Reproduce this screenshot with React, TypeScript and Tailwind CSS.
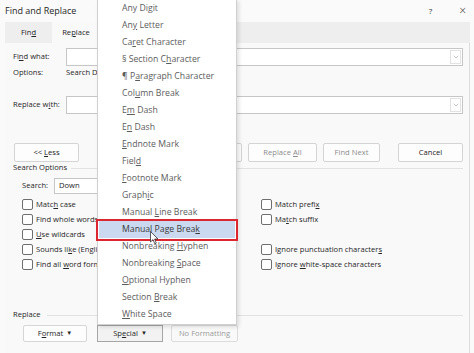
import { ChevronDown } from 'lucide-react'

function Mn({ t, k }: { t: string; k: number }) {
  if (k < 0) return <span>{t}</span>
  return (
    <span className="whitespace-pre">
      {t.slice(0, k)}
      <span className="underline underline-offset-[1px] decoration-[0.5px]">{t[k]}</span>
      {t.slice(k + 1)}
    </span>
  )
}

const menu: [string, number][] = [
  ['Any Digit', 6],
  ['Any Letter', 2],
  ['Caret Character', 2],
  ['§ Section Character', 11],
  ['¶ Paragraph Character', 3],
  ['Column Break', 3],
  ['Em Dash', 1],
  ['En Dash', 1],
  ['Endnote Mark', 0],
  ['Field', 4],
  ['Footnote Mark', 0],
  ['Graphic', 5],
  ['Manual Line Break', 7],
  ['Manual Page Break', 16],
  ['Nonbreaking Hyphen', 12],
  ['Nonbreaking Space', 12],
  ['Optional Hyphen', 0],
  ['Section Break', 8],
  ['White Space', 0],
]

function Combo() {
  return (
    <div className="flex-1 h-[18px] bg-white border border-[#c6c6c6] flex justify-end items-center pr-[1px]">
      <div className="w-[11px] h-[14px] border border-[#e2e2e2] flex items-center justify-center">
        <ChevronDown size={8} strokeWidth={1.5} className="text-[#8a8a8a]" />
      </div>
    </div>
  )
}

function Check({ t, k }: { t: string; k: number }) {
  return (
    <div className="h-[15px] flex items-center gap-[3px] whitespace-nowrap">
      <span className="w-[11px] h-[11px] bg-white border border-[#6e6e6e] rounded-[2px] shrink-0" />
      <Mn t={t} k={k} />
    </div>
  )
}

function Btn({ w, dim, children }: { w: string; dim?: boolean; children: React.ReactNode }) {
  return (
    <div
      className={`${w} h-[19px] shrink-0 bg-[#fdfdfd] border border-[#d4d4d4] rounded-[2px] flex items-center justify-center ${dim ? 'text-[#8c8c8c]' : 'text-[#222]'}`}
    >
      {children}
    </div>
  )
}

export default function App() {
  return (
    <div className="relative w-[474px] h-[353px] overflow-hidden bg-[#fafafa] flex flex-col font-['Open_Sans',sans-serif] text-[7.6px] text-[#262626]">
      {/* title */}
      <div className="h-[22px] shrink-0 flex items-center pl-[5px] pr-[8px]">
        <span className="text-[9px]">Find and Replace</span>
        <div className="ml-auto flex items-center gap-[27px] text-[#333]">
          <span className="text-[8px]">?</span>
          <span className="text-[12px] font-light leading-none">×</span>
        </div>
      </div>

      {/* tabs */}
      <div className="h-[21px] shrink-0 ml-[5px] mr-[4px] bg-[#eeeeef] flex">
        <div className="w-[47px] flex items-center justify-center">
          <Mn t="Find" k={3} />
        </div>
        <div className="w-[48px] bg-[#f9f9f9] flex items-center justify-center">
          <Mn t="Replace" k={2} />
        </div>
      </div>

      {/* panel */}
      <div className="flex-1 ml-[5px] mr-[4px] bg-[#f9f9f9] border-r border-[#dcdcdc] pl-[8px] pr-[6px] flex flex-col">
        <div className="mt-[5px] h-[18px] flex items-center">
          <span className="w-[53px] shrink-0">
            <Mn t="Find what:" k={2} />
          </span>
          <Combo />
        </div>
        <div className="h-[14px] flex items-center">
          <span className="w-[53px] shrink-0">Options:</span>
          <span>Search Down</span>
        </div>
        <div className="mt-[16px] h-[18px] flex items-center">
          <span className="w-[53px] shrink-0">
            <Mn t="Replace with:" k={9} />
          </span>
          <Combo />
        </div>

        <div className="mt-[29px] h-[19px] flex items-center">
          <div className="ml-[1px]">
            <Btn w="w-[65px]">
              <span className="whitespace-pre">
                {'<< '}
                <span className="underline underline-offset-[1px] decoration-[0.5px]">L</span>
                ess
              </span>
            </Btn>
          </div>
          <div className="ml-[94px]">
            <Btn w="w-[69px]" dim>
              <Mn t="Replace" k={0} />
            </Btn>
          </div>
          <div className="ml-[6px]">
            <Btn w="w-[69px]" dim>
              <Mn t="Replace All" k={8} />
            </Btn>
          </div>
          <div className="ml-[6px]">
            <Btn w="w-[57px]" dim>
              <Mn t="Find Next" k={-1} />
            </Btn>
          </div>
          <div className="ml-[18px]">
            <Btn w="w-[65px]">Cancel</Btn>
          </div>
        </div>

        <div className="h-[12px] flex items-center">
          <span className="whitespace-nowrap">Search Options</span>
          <div className="ml-[4px] flex-1 h-px bg-[#e2e2e2]" />
        </div>

        <div className="mt-[4px] h-[16px] flex items-center pl-[9px]">
          <span className="w-[32px] shrink-0">Search:</span>
          <div className="w-[80px] h-[16px] bg-white border border-[#c6c6c6] flex items-center pl-[4px]">Down</div>
        </div>

        <div className="mt-[3px] pl-[9px] grid grid-cols-[239px_1fr]">
          <div className="flex flex-col">
            <Check t="Match case" k={4} />
            <Check t="Find whole words only" k={20} />
            <Check t="Use wildcards" k={0} />
            <Check t="Sounds like (English)" k={9} />
            <Check t="Find all word forms (English)" k={9} />
          </div>
          <div className="flex flex-col">
            <Check t="Match prefix" k={11} />
            <Check t="Match suffix" k={2} />
            <div className="h-[15px]" />
            <Check t="Ignore punctuation characters" k={28} />
            <Check t="Ignore white-space characters" k={7} />
          </div>
        </div>

        <div className="mt-[37px] h-[12px] flex items-center">
          <span>Replace</span>
          <div className="ml-[6px] flex-1 h-px bg-[#e2e2e2]" />
        </div>

        <div className="mt-[4px] h-[17px] flex items-center pl-[10px]">
          <div className="w-[64px] h-[17px] bg-[#fdfdfd] border border-[#d6d6d6] rounded-[2px] flex items-center justify-center gap-[3px]">
            <Mn t="Format" k={1} />
            <span className="text-[6px]">▼</span>
          </div>
          <div className="ml-[10px] w-[66px] h-[17px] bg-[#f2f2f2] border border-[#a6a6a6] flex items-center justify-center gap-[3px]">
            <Mn t="Special" k={2} />
            <span className="text-[6px]">▼</span>
          </div>
          <div className="ml-[8px] w-[67px] h-[17px] bg-[#f9f9f9] border border-[#dcdcdc] rounded-[2px] flex items-center justify-center text-[#9a9a9a]">
            No Formatting
          </div>
        </div>
      </div>

      {/* special menu */}
      <div className="absolute left-[97px] top-[-1px] w-[140px] bg-white border border-[#d0d0d0] pb-[1px] shadow-[2px_2px_4px_rgba(0,0,0,0.12)] text-[8.7px] text-[#5c5c5c]">
        {menu.map(([t, k]) => {
          const sel = t === 'Manual Page Break'
          return (
            <div
              key={t}
              className={`relative h-[17px] mx-[1px] pl-[23px] flex items-center whitespace-nowrap ${sel ? 'bg-[#cbd9f0] text-[#3a3a3a]' : ''}`}
            >
              <Mn t={t} k={k} />
              {sel && <div className="absolute -left-[3px] -right-[3px] -top-[2px] -bottom-[3px] border-2 border-[#dc2630]" />}
            </div>
          )
        })}
      </div>

      {/* mouse pointer */}
      <svg className="absolute left-[150px] top-[231px]" width="9" height="14" viewBox="0 0 9 14">
        <path d="M0.5 0.5 L0.5 11 L3 8.6 L4.8 12.8 L6.3 12.1 L4.6 8 L8 8 Z" fill="#fff" stroke="#333" strokeWidth="0.8" strokeLinejoin="round" />
      </svg>
    </div>
  )
}
